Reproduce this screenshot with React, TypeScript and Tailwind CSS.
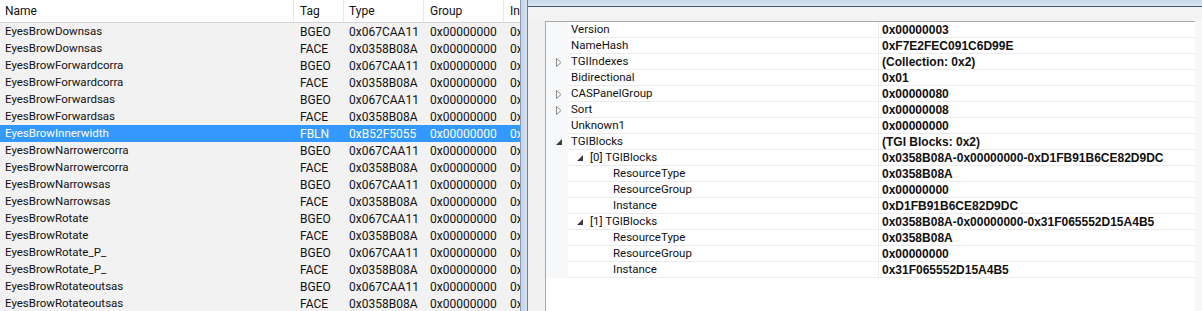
import React from "react";

type Row = { name: string; tag: string; type: string };

const rows: Row[] = [
  { name: "EyesBrowDownsas", tag: "BGEO", type: "0x067CAA11" },
  { name: "EyesBrowDownsas", tag: "FACE", type: "0x0358B08A" },
  { name: "EyesBrowForwardcorra", tag: "BGEO", type: "0x067CAA11" },
  { name: "EyesBrowForwardcorra", tag: "FACE", type: "0x0358B08A" },
  { name: "EyesBrowForwardsas", tag: "BGEO", type: "0x067CAA11" },
  { name: "EyesBrowForwardsas", tag: "FACE", type: "0x0358B08A" },
  { name: "EyesBrowInnerwidth", tag: "FBLN", type: "0xB52F5055" },
  { name: "EyesBrowNarrowercorra", tag: "BGEO", type: "0x067CAA11" },
  { name: "EyesBrowNarrowercorra", tag: "FACE", type: "0x0358B08A" },
  { name: "EyesBrowNarrowsas", tag: "BGEO", type: "0x067CAA11" },
  { name: "EyesBrowNarrowsas", tag: "FACE", type: "0x0358B08A" },
  { name: "EyesBrowRotate", tag: "BGEO", type: "0x067CAA11" },
  { name: "EyesBrowRotate", tag: "FACE", type: "0x0358B08A" },
  { name: "EyesBrowRotate_P_", tag: "BGEO", type: "0x067CAA11" },
  { name: "EyesBrowRotate_P_", tag: "FACE", type: "0x0358B08A" },
  { name: "EyesBrowRotateoutsas", tag: "BGEO", type: "0x067CAA11" },
  { name: "EyesBrowRotateoutsas", tag: "FACE", type: "0x0358B08A" },
];

type Prop = { name: string; value: string; level: number; arrow?: "closed" | "open" };

const props: Prop[] = [
  { name: "Version", value: "0x00000003", level: 0 },
  { name: "NameHash", value: "0xF7E2FEC091C6D99E", level: 0 },
  { name: "TGIIndexes", value: "(Collection: 0x2)", level: 0, arrow: "closed" },
  { name: "Bidirectional", value: "0x01", level: 0 },
  { name: "CASPanelGroup", value: "0x00000080", level: 0, arrow: "closed" },
  { name: "Sort", value: "0x00000008", level: 0, arrow: "closed" },
  { name: "Unknown1", value: "0x00000000", level: 0 },
  { name: "TGIBlocks", value: "(TGI Blocks: 0x2)", level: 0, arrow: "open" },
  { name: "[0] TGIBlocks", value: "0x0358B08A-0x00000000-0xD1FB91B6CE82D9DC", level: 1, arrow: "open" },
  { name: "ResourceType", value: "0x0358B08A", level: 2 },
  { name: "ResourceGroup", value: "0x00000000", level: 2 },
  { name: "Instance", value: "0xD1FB91B6CE82D9DC", level: 2 },
  { name: "[1] TGIBlocks", value: "0x0358B08A-0x00000000-0x31F065552D15A4B5", level: 1, arrow: "open" },
  { name: "ResourceType", value: "0x0358B08A", level: 2 },
  { name: "ResourceGroup", value: "0x00000000", level: 2 },
  { name: "Instance", value: "0x31F065552D15A4B5", level: 2 },
];

function Arrow({ kind }: { kind: "closed" | "open" }) {
  if (kind === "closed") {
    return (
      <svg width="6" height="9" viewBox="0 0 6 9">
        <path d="M0.5 0.5 L5 4.5 L0.5 8.5 Z" fill="none" stroke="#8a8a8a" strokeWidth="1" />
      </svg>
    );
  }
  return (
    <svg width="6" height="6" viewBox="0 0 6 6">
      <path d="M6 0 L6 6 L0 6 Z" fill="#3c3c3c" />
    </svg>
  );
}

export default function App() {
  return (
    <div
      className="flex h-[311px] w-[1202px] overflow-hidden bg-white text-[12px] text-[#111]"
      style={{ fontFamily: 'Roboto, "Liberation Sans", Arial, sans-serif' }}
    >
      {/* resource list */}
      <div className="flex w-[520px] shrink-0 flex-col bg-[#f2f2f2]">
        <div className="flex h-[23px] shrink-0 items-center border-b border-[#d5d5d5] bg-white">
          <div className="w-[293px] pl-[5px]">Name</div>
          <div className="h-full w-[50px] border-l border-[#e8e8e8] pl-[6px] leading-[22px]">Tag</div>
          <div className="h-full w-[80px] border-l border-[#e8e8e8] pl-[5px] leading-[22px]">Type</div>
          <div className="h-full w-[80px] border-l border-[#e8e8e8] pl-[6px] leading-[22px]">Group</div>
          <div className="h-full flex-1 overflow-hidden border-l border-[#e8e8e8] pl-[6px] leading-[22px]">Ins</div>
        </div>
        {rows.map((r, i) => {
          const sel = r.tag === "FBLN";
          return (
            <div
              key={i}
              className={`flex h-[17px] shrink-0 items-center whitespace-nowrap ${sel ? "bg-[#3399ff] text-white" : ""}`}
            >
              <div className="w-[293px] pt-px pl-[5px] text-[11.5px]">{r.name}</div>
              <div className="w-[50px] pl-[7px]">{r.tag}</div>
              <div className="w-[80px] pl-[6px]">{r.type}</div>
              <div className="w-[80px] pl-[7px]">0x00000000</div>
              <div className="flex-1 overflow-hidden pl-[7px]">0x</div>
            </div>
          );
        })}
      </div>

      {/* window frame left */}
      <div className="flex w-[8px] shrink-0">
        <div className="w-px bg-[#8c9db3]" />
        <div className="flex-1 bg-gradient-to-r from-[#c3d4e8] to-[#d6e2f1]" />
        <div className="w-px bg-[#6f7f94]" />
      </div>

      {/* property window */}
      <div className="flex flex-1 flex-col bg-[#f0f0f0]">
        <div className="h-[7px] shrink-0 border-b border-[#3f5572] bg-gradient-to-b from-[#c5d6ea] to-[#dce7f4]" />
        <div className="h-[14px] shrink-0 bg-[#f3f3f3]" />
        <div className="flex flex-1 pl-[17px]">
          <div className="flex w-[650px] flex-col border-l border-t border-[#a9a9a9] bg-white">
            {props.map((p, i) => (
              <div key={i} className="flex h-[16px] shrink-0">
                <div className="flex w-[22px] items-center bg-[#f7f8fa] pl-[10px]">
                  {p.level === 0 && p.arrow ? <Arrow kind={p.arrow} /> : null}
                </div>
                <div className="flex w-[310px] items-center border-b border-[#ececec] pt-px pl-[3px] text-[11.5px]">
                  {p.level === 1 ? (
                    <span className="mr-[7px] ml-[6px] flex items-center">
                      <Arrow kind="open" />
                    </span>
                  ) : null}
                  {p.level === 2 ? <span className="w-[42px]" /> : null}
                  <span className="whitespace-nowrap">{p.name}</span>
                </div>
                <div
                  className="flex flex-1 items-center border-b border-l border-[#ececec] pl-[3px] font-bold whitespace-nowrap"
                  style={{ fontFamily: '"Liberation Sans", Arial, sans-serif' }}
                >
                  {p.value}
                </div>
              </div>
            ))}
            <div className="flex-1 bg-white" />
          </div>
          <div className="flex-1 bg-[#f7f7f7]" />
        </div>
      </div>
    </div>
  );
}
